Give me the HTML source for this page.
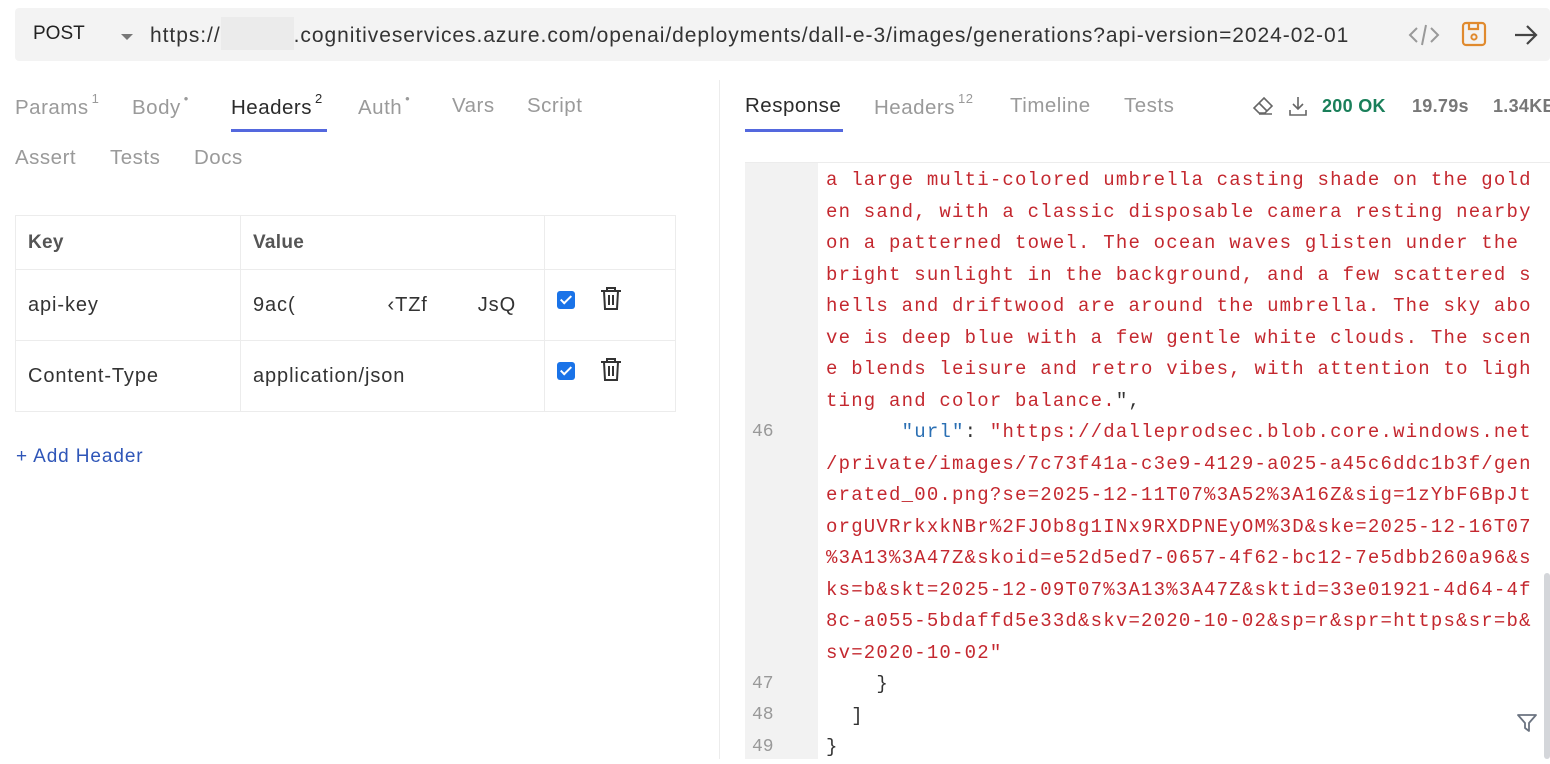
<!DOCTYPE html>
<html><head><meta charset="utf-8"><style>
*{margin:0;padding:0;box-sizing:border-box}
body{width:1550px;height:759px;overflow:hidden;background:#fff;font-family:"Liberation Sans",sans-serif;position:relative;color:#333}
.abs{position:absolute;white-space:nowrap}
.bar{position:absolute;left:15px;top:8px;width:1535px;height:53px;background:#f3f3f3;border-radius:4px}
.tab{position:absolute;font-size:20.5px;letter-spacing:0.5px;color:#9a9a9a;white-space:nowrap}
.tab sup{font-size:13px;position:relative;top:-3px;margin-left:3px}
.act{color:#2b2b2b}
.ul{position:absolute;height:3px;background:#5468de}
table{position:absolute;left:15px;top:215px;border-collapse:collapse;width:661px}
td{border:1px solid #ececec;font-size:20px;letter-spacing:0.9px;padding-left:12px;color:#333}
.code{position:absolute;left:826px;font-family:"Liberation Mono",monospace;font-size:19px;letter-spacing:1.2px;color:#c4282f;white-space:pre;line-height:31.5px}
.ln{position:absolute;left:752px;font-family:"Liberation Mono",monospace;font-size:18px;color:#999;line-height:31.5px}
.cb{display:inline-block;width:18px;height:18px;background:#1a73e8;border-radius:3px;position:absolute;left:558px}
.cb:after{content:"";position:absolute;left:6px;top:2px;width:4px;height:9px;border:solid #fff;border-width:0 2.5px 2.5px 0;transform:rotate(45deg)}
</style></head><body>
<div class="bar"></div>
<div class="abs" style="left:33px;top:23px;font-size:19px;color:#222">POST</div>
<div class="abs" style="left:121px;top:34px;width:0;height:0;border-left:6px solid transparent;border-right:6px solid transparent;border-top:6px solid #777"></div>
<div class="abs" style="left:150px;top:23px;font-size:21px;letter-spacing:0.95px;color:#333">https://<span style="display:inline-block;width:73px;height:33px;background:#ebebeb;vertical-align:middle;margin-top:-6px"></span>.cognitiveservices.azure.com/openai/deployments/dall-e-3/images/generations?api-version=2024-02-01</div>
<svg class="abs" style="left:1408px;top:22px" width="32" height="26" viewBox="0 0 32 26"><path d="M9 6L2 13l7 7M23 6l7 7-7 7M18 3l-4 20" fill="none" stroke="#999" stroke-width="2"/></svg>
<svg class="abs" style="left:1461px;top:20px" width="26" height="28" viewBox="0 0 26 28"><rect x="2" y="3" width="22" height="22" rx="3" fill="none" stroke="#e08a2e" stroke-width="2.2"/><path d="M8 3v6h9V3" fill="none" stroke="#e08a2e" stroke-width="2.2"/><circle cx="13" cy="17" r="2.6" fill="none" stroke="#e08a2e" stroke-width="2"/></svg>
<svg class="abs" style="left:1512px;top:22px" width="28" height="26" viewBox="0 0 28 26"><path d="M3 13h21M15 4l9 9-9 9" fill="none" stroke="#444" stroke-width="2.2"/></svg>

<div class="tab" style="left:15px;top:94px">Params<sup>1</sup></div>
<div class="tab" style="left:132px;top:94px">Body<sup>•</sup></div>
<div class="tab act" style="left:231px;top:94px">Headers<sup>2</sup></div>
<div class="ul" style="left:231px;top:129px;width:96px"></div>
<div class="tab" style="left:358px;top:94px">Auth<sup>•</sup></div>
<div class="tab" style="left:452px;top:94px">Vars</div>
<div class="tab" style="left:527px;top:94px">Script</div>
<div class="tab" style="left:15px;top:146px">Assert</div>
<div class="tab" style="left:110px;top:146px">Tests</div>
<div class="tab" style="left:194px;top:146px">Docs</div>

<table>
<tr style="height:54px"><td style="width:225px;font-weight:bold;color:#555;font-size:19px;letter-spacing:0.3px">Key</td><td style="width:304px;font-weight:bold;color:#555;font-size:19px;letter-spacing:0.3px">Value</td><td></td></tr>
<tr style="height:71px"><td>api-key</td><td>9ac(<span style="display:inline-block;width:92px"></span>‹TZf<span style="display:inline-block;width:50px"></span>JsQ</td><td style="position:relative"><span class="cb" style="left:12px;top:21px"></span><svg style="position:absolute;left:54px;top:16px" width="24" height="26" viewBox="0 0 24 26"><path d="M2 5h20M8 5V2h8v3M5 5l1 18h12l1-18M10 9v10M14 9v10" fill="none" stroke="#333" stroke-width="2"/></svg></td></tr>
<tr style="height:71px"><td>Content-Type</td><td>application/json</td><td style="position:relative"><span class="cb" style="left:12px;top:21px"></span><svg style="position:absolute;left:54px;top:16px" width="24" height="26" viewBox="0 0 24 26"><path d="M2 5h20M8 5V2h8v3M5 5l1 18h12l1-18M10 9v10M14 9v10" fill="none" stroke="#333" stroke-width="2"/></svg></td></tr>
</table>
<div class="abs" style="left:16px;top:446px;font-size:19px;letter-spacing:0.9px;color:#2f56b8">+ Add Header</div>

<div class="abs" style="left:719px;top:80px;width:1px;height:679px;background:#ececec"></div>
<div class="tab act" style="left:745px;top:94px">Response</div>
<div class="ul" style="left:745px;top:129px;width:98px"></div>
<div class="tab" style="left:874px;top:94px">Headers<sup>12</sup></div>
<div class="tab" style="left:1010px;top:94px">Timeline</div>
<div class="tab" style="left:1124px;top:94px">Tests</div>
<svg class="abs" style="left:1252px;top:96px" width="22" height="20" viewBox="0 0 22 20"><path d="M12 2l8 8-7 7H7l-5-5zM7 7l8 8M7 18h13" fill="none" stroke="#666" stroke-width="1.6"/></svg>
<svg class="abs" style="left:1288px;top:95px" width="20" height="22" viewBox="0 0 20 22"><path d="M10 2v12M5 9l5 5 5-5M2 15v5h16v-5" fill="none" stroke="#666" stroke-width="1.6"/></svg>
<div class="abs" style="left:1322px;top:96px;font-size:18px;letter-spacing:0.3px;font-weight:bold;color:#1a7f5a">200 OK</div>
<div class="abs" style="left:1412px;top:96px;font-size:18px;letter-spacing:0.3px;font-weight:bold;color:#777">19.79s</div>
<div class="abs" style="left:1493px;top:96px;font-size:18px;letter-spacing:0.3px;font-weight:bold;color:#777">1.34KB</div>

<div class="abs" style="left:745px;top:162px;width:805px;height:1px;background:#ececec"></div>
<div class="abs" style="left:745px;top:163px;width:73px;height:596px;background:#f2f2f2"></div>
<div class="ln" style="top:417px">46</div>
<div class="ln" style="top:669px">47</div>
<div class="ln" style="top:700px">48</div>
<div class="ln" style="top:732px">49</div>
<div class="code" style="top:165px">a large multi-colored umbrella casting shade on the gold
en sand, with a classic disposable camera resting nearby
on a patterned towel. The ocean waves glisten under the
bright sunlight in the background, and a few scattered s
hells and driftwood are around the umbrella. The sky abo
ve is deep blue with a few gentle white clouds. The scen
e blends leisure and retro vibes, with attention to ligh
ting and color balance.<span style="color:#333">",</span>
<span style="color:#333">      </span><span style="color:#2a6fb3">"url"</span><span style="color:#333">: </span>"https://dalleprodsec.blob.core.windows.net
/private/images/7c73f41a-c3e9-4129-a025-a45c6ddc1b3f/gen
erated_00.png?se=2025-12-11T07%3A52%3A16Z&amp;sig=1zYbF6BpJt
orgUVRrkxkNBr%2FJOb8g1INx9RXDPNEyOM%3D&amp;ske=2025-12-16T07
%3A13%3A47Z&amp;skoid=e52d5ed7-0657-4f62-bc12-7e5dbb260a96&amp;s
ks=b&amp;skt=2025-12-09T07%3A13%3A47Z&amp;sktid=33e01921-4d64-4f
8c-a055-5bdaffd5e33d&amp;skv=2020-10-02&amp;sp=r&amp;spr=https&amp;sr=b&amp;
sv=2020-10-02"
<span style="color:#333">    }
  ]
}</span></div>
<div class="abs" style="left:1544px;top:573px;width:6px;height:186px;background:#d4d6da;border-radius:3px"></div>
<svg class="abs" style="left:1516px;top:712px" width="22" height="22" viewBox="0 0 22 22"><path d="M2 3h18l-7 8v8l-4-3v-5z" fill="none" stroke="#6b7380" stroke-width="1.8" stroke-linejoin="round"/></svg>
</body></html>
